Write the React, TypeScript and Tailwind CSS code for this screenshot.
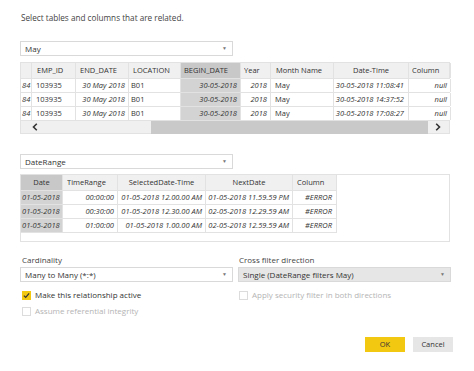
import React from 'react';

type Col = { w: string; head: string; hAlign: string; cell: string; hl?: boolean };

const cols1: Col[] = [
  { w: 'w-[11px]', head: '', hAlign: 'text-left', cell: 'italic text-left pl-[1px]' },
  { w: 'w-[44px]', head: 'EMP_ID', hAlign: 'text-left pl-[5px]', cell: 'text-left pl-[4px]' },
  { w: 'w-[53px]', head: 'END_DATE', hAlign: 'text-left pl-[4px]', cell: 'italic text-right pr-[3px]' },
  { w: 'w-[52px]', head: 'LOCATION', hAlign: 'text-left pl-[4px]', cell: 'text-left pl-[2px]' },
  { w: 'w-[60px]', head: 'BEGIN_DATE', hAlign: 'text-left pl-[3px]', cell: 'italic text-right pr-[3px]', hl: true },
  { w: 'w-[30px]', head: 'Year', hAlign: 'text-left pl-[3px]', cell: 'italic text-right pr-[3px]' },
  { w: 'w-[63px]', head: 'Month Name', hAlign: 'text-left pl-[5px]', cell: 'text-left pl-[4px]' },
  { w: 'w-[75px]', head: 'Date-Time', hAlign: 'text-center', cell: 'italic text-right pr-[4px]' },
  { w: 'w-[42px]', head: 'Column', hAlign: 'text-left pl-[3px]', cell: 'italic text-right pr-[3px]' },
];

const rows1 = [
  ['84', '103935', '30 May 2018', 'B01', '30-05-2018', '2018', 'May', '30-05-2018 11:08:41', 'null'],
  ['84', '103935', '30 May 2018', 'B01', '30-05-2018', '2018', 'May', '30-05-2018 14:37:52', 'null'],
  ['84', '103935', '30 May 2018', 'B01', '30-05-2018', '2018', 'May', '30-05-2018 17:08:27', 'null'],
];

const cols2: Col[] = [
  { w: 'w-[42px]', head: 'Date', hAlign: 'text-center', cell: 'italic text-left pl-[1px]', hl: true },
  { w: 'w-[55px]', head: 'TimeRange', hAlign: 'text-left pl-[4px]', cell: 'italic text-right pr-[3px]' },
  { w: 'w-[88px]', head: 'SelectedDate-Time', hAlign: 'text-center', cell: 'italic text-right pr-[3px]' },
  { w: 'w-[87px]', head: 'NextDate', hAlign: 'text-center', cell: 'italic text-right pr-[3px]' },
  { w: 'w-[44px]', head: 'Column', hAlign: 'text-left pl-[4px]', cell: 'italic text-right pr-[4px]' },
];

const rows2 = [
  ['01-05-2018', '00:00:00', '01-05-2018 12.00.00 AM', '01-05-2018 11.59.59 PM', '#ERROR'],
  ['01-05-2018', '00:30:00', '01-05-2018 12.30.00 AM', '02-05-2018 12.29.59 AM', '#ERROR'],
  ['01-05-2018', '01:00:00', '01-05-2018 1.00.00 AM', '02-05-2018 12.59.59 AM', '#ERROR'],
];

function Select({ label, gray }: { label: string; gray?: boolean }) {
  return (
    <div
      className={`w-[213px] h-[15px] border border-[#d9d9d9] flex items-center justify-between pl-[4px] pr-[5px] text-[8px] text-[#333] ${
        gray ? 'bg-[#e6e6e6]' : 'bg-white'
      }`}
    >
      <span>{label}</span>
      <span className="text-[5px] text-[#777]">▼</span>
    </div>
  );
}

function Chevron({ dir }: { dir: 'left' | 'right' }) {
  return (
    <svg width="6" height="8" viewBox="0 0 6 8">
      <path
        d={dir === 'left' ? 'M4.8 0.8 L1.5 4 L4.8 7.2' : 'M1.2 0.8 L4.5 4 L1.2 7.2'}
        stroke="#333"
        strokeWidth="1.6"
        fill="none"
      />
    </svg>
  );
}

function Grid({ cols, rows }: { cols: Col[]; rows: string[][] }) {
  return (
    <div className="flex flex-col text-[7.5px] text-[#333]">
      <div className="flex h-[15px] bg-[#f0f0f0]">
        {cols.map((c, i) => (
          <div
            key={i}
            className={`${c.w} shrink-0 flex items-center border-r border-[#e2e2e2] ${c.hAlign} ${
              c.hl ? 'bg-[#c8c8c8]' : ''
            }`}
          >
            <span className="w-full whitespace-nowrap overflow-hidden">{c.head}</span>
          </div>
        ))}
      </div>
      {rows.map((r, ri) => (
        <div key={ri} className="flex h-[14px] border-t border-[#e2e2e2]">
          {cols.map((c, i) => (
            <div
              key={i}
              className={`${c.w} shrink-0 flex items-center border-r border-[#e2e2e2] ${
                c.hl ? 'bg-[#d3d3d3]' : 'bg-white'
              }`}
            >
              <span className={`w-full whitespace-nowrap overflow-hidden ${c.cell}`}>{r[i]}</span>
            </div>
          ))}
        </div>
      ))}
    </div>
  );
}

function Check({ label, checked, disabled }: { label: string; checked?: boolean; disabled?: boolean }) {
  return (
    <div className="flex items-center gap-[4px] h-[10px]">
      <div
        className={`w-[9px] h-[9px] flex items-center justify-center ${
          checked ? 'bg-[#f2c811]' : 'border border-[#dcdcdc] bg-white'
        }`}
      >
        {checked && (
          <svg width="7" height="7" viewBox="0 0 8 8">
            <path d="M1 4.2 L3.1 6.2 L7 1.6" stroke="#333" strokeWidth="1.4" fill="none" />
          </svg>
        )}
      </div>
      <span className={`text-[8px] ${disabled ? 'text-[#b4b4b4]' : 'text-[#333]'}`}>{label}</span>
    </div>
  );
}

export default function App() {
  return (
    <div
      className="w-[474px] h-[371px] bg-white pl-[20px] pt-[12px] overflow-hidden"
      style={{ fontFamily: '"Open Sans", "Noto Sans", sans-serif' }}
    >
      <div className="text-[8.2px] text-[#444] h-[12px] leading-[12px] pl-[1px]">
        Select tables and columns that are related.
      </div>

      <div className="mt-[17px]">
        <Select label="May" />
      </div>

      <div className="mt-[6px] w-[430px] border border-[#e2e2e2]">
        <Grid cols={cols1} rows={rows1} />
        <div className="flex items-center h-[13px] bg-[#f0f0f0] border-t border-[#e2e2e2]">
          <div className="w-[20px] pl-[11px] flex items-center">
            <Chevron dir="left" />
          </div>
          <div className="w-[110px]" />
          <div className="w-[277px] h-[13px] bg-[#c9c9c9]" />
          <div className="pl-[7px] flex items-center">
            <Chevron dir="right" />
          </div>
        </div>
      </div>

      <div className="mt-[20px]">
        <Select label="DateRange" />
      </div>

      <div className="mt-[5px] w-[430px] h-[68px] border border-[#e2e2e2]">
        <div className="w-[316px] border-b border-[#e2e2e2]">
          <Grid cols={cols2} rows={rows2} />
        </div>
      </div>

      <div className="flex mt-[12px] gap-[5px]">
        <div className="flex flex-col">
          <div className="text-[8px] text-[#444] h-[13px] pl-[2px]">Cardinality</div>
          <Select label="Many to Many (*:*)" />
          <div className="mt-[8px] pl-[2px] flex flex-col gap-[6px]">
            <Check label="Make this relationship active" checked />
            <Check label="Assume referential integrity" disabled />
          </div>
        </div>
        <div className="flex flex-col">
          <div className="text-[8px] text-[#444] h-[13px] pl-[1px]">Cross filter direction</div>
          <Select label="Single (DateRange filters May)" gray />
          <div className="mt-[8px] pl-[1px]">
            <Check label="Apply security filter in both directions" disabled />
          </div>
        </div>
      </div>

      <div className="flex justify-end gap-[8px] w-[433px] mt-[21px]">
        <button className="w-[40px] h-[15px] bg-[#f2c811] text-[7.5px] text-[#333]">OK</button>
        <button className="w-[40px] h-[15px] bg-[#e6e6e6] text-[7.5px] text-[#333]">Cancel</button>
      </div>
    </div>
  );
}
